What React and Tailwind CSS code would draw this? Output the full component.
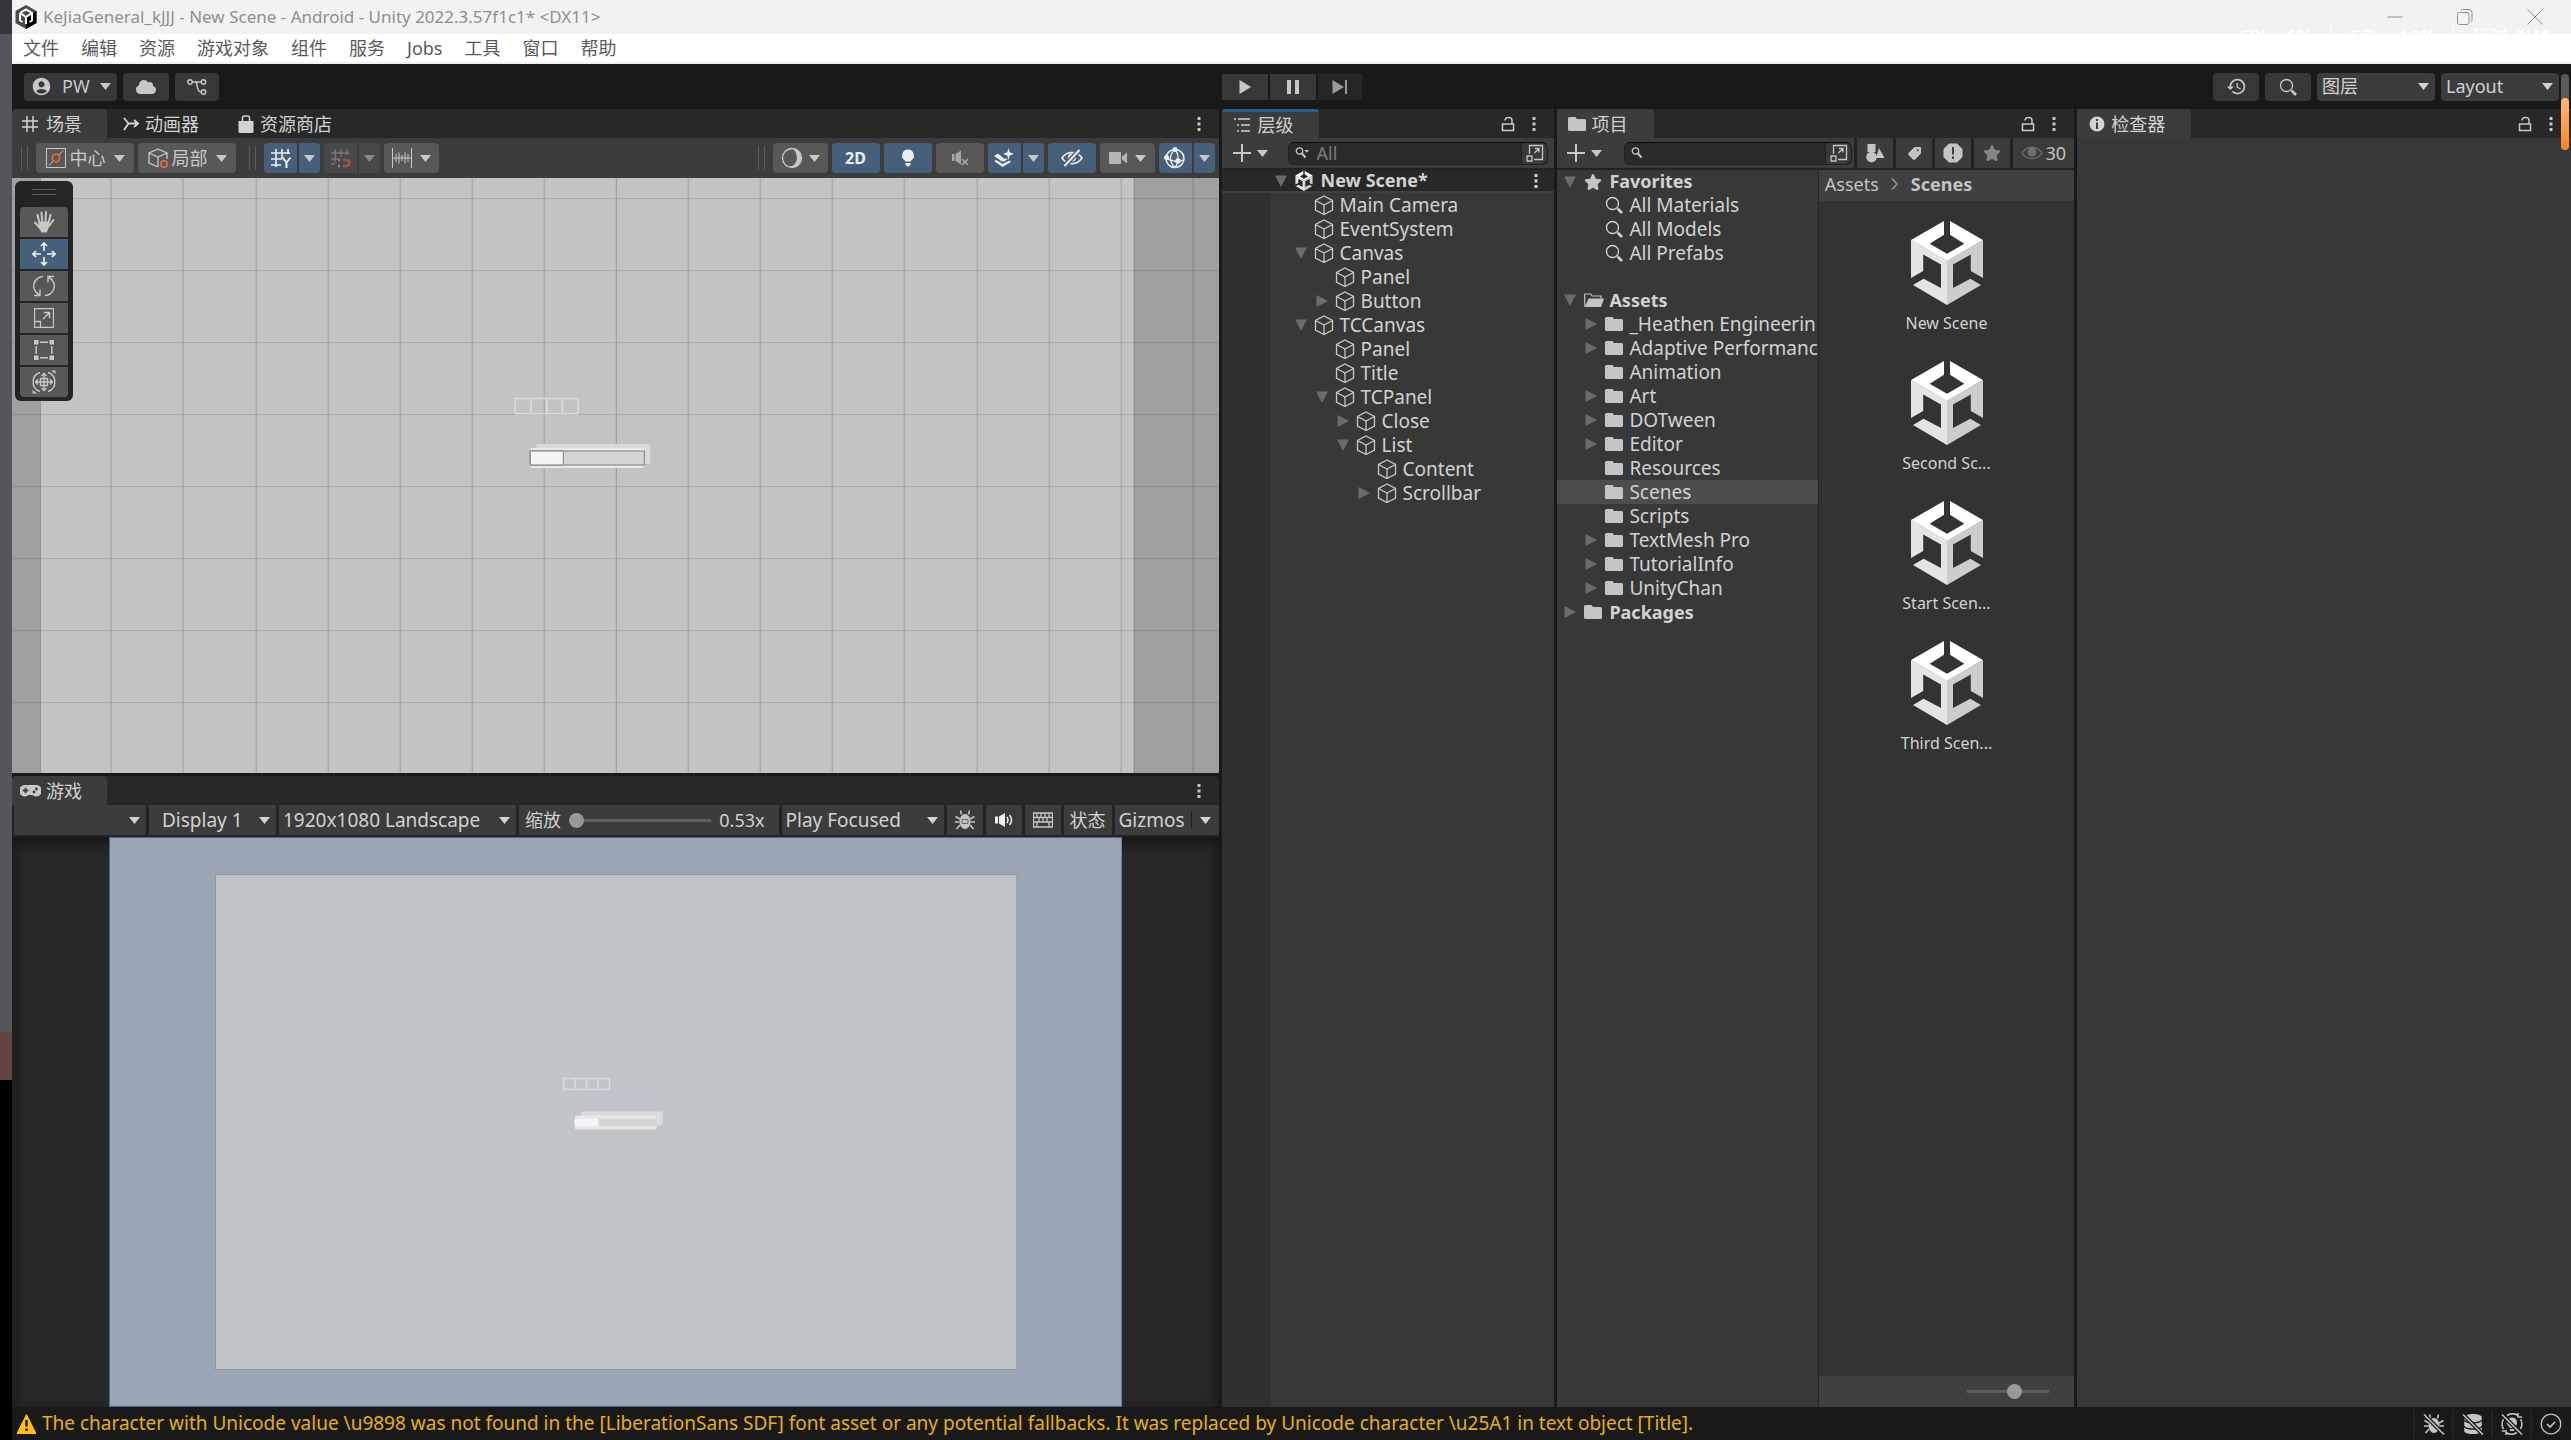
import { FaCloud, FaDatabase, FaStar, FaTag } from "react-icons/fa6";
import { MdAccountCircle, MdHistory } from "react-icons/md";

const MENUS = ["文件", "编辑", "资源", "游戏对象", "组件", "服务", "Jobs", "工具", "窗口", "帮助"];

const HIERARCHY = [
  { name: "Main Camera", depth: 0 },
  { name: "EventSystem", depth: 0 },
  { name: "Canvas", depth: 0, open: true },
  { name: "Panel", depth: 1 },
  { name: "Button", depth: 1, open: false },
  { name: "TCCanvas", depth: 0, open: true },
  { name: "Panel", depth: 1 },
  { name: "Title", depth: 1 },
  { name: "TCPanel", depth: 1, open: true },
  { name: "Close", depth: 2, open: false },
  { name: "List", depth: 2, open: true },
  { name: "Content", depth: 3 },
  { name: "Scrollbar", depth: 3, open: false },
];

const FAVORITES = ["All Materials", "All Models", "All Prefabs"];

const FOLDERS = [
  { name: "_Heathen Engineerin", open: false },
  { name: "Adaptive Performanc", open: false },
  { name: "Animation" },
  { name: "Art", open: false },
  { name: "DOTween", open: false },
  { name: "Editor", open: false },
  { name: "Resources" },
  { name: "Scenes", selected: true },
  { name: "Scripts" },
  { name: "TextMesh Pro", open: false },
  { name: "TutorialInfo", open: false },
  { name: "UnityChan", open: false },
];

const SCENES = ["New Scene", "Second Sc...", "Start Scen...", "Third Scen..."];

const GRID_X = [99, 171, 244, 316, 388, 460, 532, 676, 748, 820, 892, 965, 1037, 1109, 1181];
const GRID_Y = [20, 92, 164, 236, 308, 380, 452, 524];

/* ---------- icons ---------- */

function Icon({ size = 20, box = 20, className = "", children }) {
  return (
    <svg
      width={size}
      height={size}
      viewBox={`0 0 ${box} ${box}`}
      fill="none"
      stroke="currentColor"
      className={`shrink-0 ${className}`}
      aria-hidden="true"
    >
      {children}
    </svg>
  );
}

function Caret({ className = "" }) {
  return (
    <svg width="11" height="7" viewBox="0 0 11 7" fill="currentColor" className={`shrink-0 ${className}`} aria-hidden="true">
      <path d="M0 0h11L5.500 7z" />
    </svg>
  );
}

function Foldout({ open }) {
  return (
    <svg width="12" height="12" viewBox="0 0 12 12" fill="#6c6c6c" className="shrink-0" aria-hidden="true">
      {open === true && <path d="M0 0.500h12L6 12z" />}
      {open === false && <path d="M0.500 0v12L12 6z" />}
    </svg>
  );
}

function Kebab() {
  return (
    <svg width="4" height="16" viewBox="0 0 4 16" fill="currentColor" aria-hidden="true">
      <path d="M0.500 1h3v3h-3zM0.500 6.500h3v3h-3zM0.500 12h3v3h-3z" />
    </svg>
  );
}

function Lock() {
  return (
    <Icon size={16} box={16}>
      <path d="M2.500 8h11v6.500h-11zM12 8V4.500a3 3 0 0 0-3-3H8a3 3 0 0 0-3 3" strokeWidth="1.500" />
    </Icon>
  );
}

function CubeIcon() {
  return (
    <Icon size={20} className="text-[#c8c8c8]">
      <path d="M10 1l8.500 4.500v9.500L10 19.500 1.500 15V5.500zM1.500 5.500L10 10l8.500-4.500M10 10v9.500" strokeWidth="1.300" />
    </Icon>
  );
}

function FolderIcon() {
  return (
    <svg width="18" height="14" viewBox="0 0 18 14" fill="#c4c4c4" className="shrink-0" aria-hidden="true">
      <path d="M1.500 0h6l1.500 2h7.500a1.500 1.500 0 0 1 1.500 1.500v9a1.500 1.500 0 0 1-1.500 1.500h-15A1.500 1.500 0 0 1 0 12.500v-11A1.500 1.500 0 0 1 1.500 0z" />
    </svg>
  );
}

function FolderOpenIcon() {
  return (
    <svg width="20" height="15" viewBox="0 0 20 15" className="shrink-0" aria-hidden="true">
      <path d="M0.700 13.500V1h6l1.500 2H17v2.500" fill="none" stroke="#c4c4c4" strokeWidth="1.200" />
      <path d="M4.500 5.500H20L17 14H0.800z" fill="#c4c4c4" />
    </svg>
  );
}

function GamepadIcon() {
  return (
    <svg width="21" height="12" viewBox="0 0 21 12" fill="#c8c8c8" className="shrink-0" aria-hidden="true">
      <path d="M5.500 0h10a5.500 5.500 0 0 1 1 11.500c-2 .5-3-1.500-4.500-1.500H9c-1.500 0-2.500 2-4.500 1.500A5.500 5.500 0 0 1 5.500 0z" />
      <path d="M5.500 2.800v5.400M2.800 5.500h5.400" stroke="#3c3c3c" strokeWidth="1.800" />
      <circle cx="16.500" cy="4" r="1.400" fill="#3c3c3c" />
      <circle cx="14" cy="7" r="1.400" fill="#3c3c3c" />
    </svg>
  );
}

function HandIcon() {
  return (
    <Icon size={24} box={24}>
      <path d="M7.500 13L5.500 5M10.300 12L9.500 2.500M13.500 12l.5-10M16.500 13l2-8M8 18l-5-5.500" strokeWidth="2" strokeLinecap="round" />
      <path d="M6.500 11.500h11l-.5 4c0 3-1.500 4-2 7H9.500c-.5-2-2-3-3-5z" fill="currentColor" stroke="none" />
      <path d="M17 16l4.500-6" strokeWidth="2" strokeLinecap="round" />
    </Icon>
  );
}

function Magnifier({ size = 18 }) {
  return (
    <Icon size={size} box={18}>
      <circle cx="7.500" cy="7.500" r="6" strokeWidth="1.300" />
      <path d="M12.500 12.500l4.500 4.500" strokeWidth="2.500" />
    </Icon>
  );
}

function SmallMagnifier({ caret }) {
  return (
    <Icon size={14} box={14}>
      <circle cx="4.500" cy="5" r="3.200" strokeWidth="1.300" />
      <path d="M7 7.500l3.500 4" strokeWidth="2" />
      {caret && <path d="M9.500 4h4.500l-2.200 2.800z" fill="currentColor" stroke="none" />}
    </Icon>
  );
}

function PopoutIcon() {
  return (
    <Icon size={18} box={18}>
      <path d="M3.500 10V1.500h13v14H8M8.500 9L13 4.500M9 4.500h4v4M1 12h5v5H1z" strokeWidth="1.300" />
    </Icon>
  );
}

function UnityCube({ className }) {
  return (
    <svg viewBox="0 0 72 84" className={`shrink-0 ${className}`} aria-hidden="true">
      <path fill="#e4e4e4" d="M0 19L36 39.500V84L2 64l10.600-6.300L30 67V43.500L12.200 33.500V50L0 57z" />
      <path fill="#cdcdcd" d="M72 19L36 39.500V84l34-20-10.600-6.300L42 67V43.500l17.800-10V50L72 57z" />
      <path fill="#fff" d="M33 0v13.700L18.700 22.700 36 32.700l17.300-10L39 13.700V0l33 19-36 20.700L0 19z" />
    </svg>
  );
}

function BugIcon({ size = 22, off }) {
  return (
    <Icon size={size} box={22} className="text-[#c4c4c4]">
      <ellipse cx="11" cy="12.500" rx="5.500" ry="7.500" fill="currentColor" stroke="none" />
      <path d="M7.500 5.500L6.500 1.500M14.500 5.500l1-4M6 10L1.500 7.500M16 10l4.500-2.500M5.500 13H1M16.500 13H21M6 16l-3.500 4M16 16l3.500 4" strokeWidth="1.600" />
      {off ? (
        <>
          <path d="M1 1.500L21 21.500" stroke="#191919" strokeWidth="4" />
          <path d="M1 1.500L21 21.500" strokeWidth="1.500" />
        </>
      ) : (
        <path d="M8 10.500h6v4H8z" stroke="#6a6a6a" />
      )}
    </Icon>
  );
}

function SceneObjects({ x, y, w, h, cell, cx, cy, outline }) {
  const handle = w * 0.29;
  return (
    <g>
      <g fill="none" stroke="#dadada" strokeWidth="1.500">
        {[0, 1, 2, 3].map((i) => (
          <rect key={i} x={cx + i * cell} y={cy} width={cell} height={cell - 0.5} />
        ))}
      </g>
      <rect x={x + 6} y={y - 4} width={w} height={h} rx="2" fill="#dadada" />
      <rect x={x} y={y} width={w} height={h} rx="2" fill="#e8e8e8" />
      <rect x={x} y={y + 3} width={w} height={h - 6} fill="#d5d5d5" stroke={outline} />
      <rect x={x} y={y + 3} width={handle} height={h - 6} rx="1.500" fill="#f5f5f5" stroke={outline} />
    </g>
  );
}

/* ---------- shared pieces ---------- */

function Tab({ icon, label, active, focused, className = "" }) {
  return (
    <button
      type="button"
      className={`flex h-full items-center rounded-t text-[18px] leading-none text-[#d2d2d2] ${
        active ? "bg-[#3c3c3c]" : ""
      } ${focused ? "border-t-[3px] border-[#2c5d87]" : ""} ${className}`}
    >
      <span className="flex w-4 justify-center">{icon}</span>
      {label}
    </button>
  );
}

function TabBar({ lock, children }) {
  return (
    <div className="flex h-[29px] shrink-0 items-center rounded-t bg-[#282828]">
      {children}
      <div className="ml-auto flex items-center gap-4 pr-[18px] text-[#c8c8c8]">
        {lock && (
          <button type="button" aria-label="锁定">
            <Lock />
          </button>
        )}
        <button type="button" aria-label="更多">
          <Kebab />
        </button>
      </div>
    </div>
  );
}

function ToolButton({ label, tone = "normal", className = "", children }) {
  const tones = {
    normal: "bg-[#585858] text-[#c8c8c8]",
    on: "bg-[#46607c] text-[#eeeeee]",
    off: "bg-[#484848] text-[#8a8a8a]",
  };
  return (
    <button
      type="button"
      aria-label={label}
      className={`flex h-[30px] shrink-0 items-center justify-center ${tones[tone]} ${className}`}
    >
      {children}
    </button>
  );
}

function SplitButton({ label, tone, children }) {
  return (
    <div className="flex gap-0.5">
      <ToolButton label={label} tone={tone} className="w-[33px] rounded-l">
        {children}
      </ToolButton>
      <ToolButton label={`${label}选项`} tone={tone} className="w-[21px] rounded-r">
        <Caret className={tone === "on" ? "text-[#c8c8c8]" : ""} />
      </ToolButton>
    </div>
  );
}

function Grip() {
  return <span className="h-6 w-[7px] border-x border-[#5c5c5c]" />;
}

function Dropdown({ label, value, className = "", selectClass = "" }) {
  return (
    <label className={`relative flex items-center bg-[#3c3c3c] ${className}`}>
      <select
        aria-label={label}
        defaultValue={value}
        className={`h-full w-full appearance-none bg-transparent text-[#d2d2d2] outline-none ${selectClass}`}
      >
        <option value={value}>{value}</option>
      </select>
      <Caret className="pointer-events-none absolute right-1.5 text-[#d2d2d2]" />
    </label>
  );
}

function SearchBox({ label, placeholder, caret, className = "" }) {
  return (
    <div
      className={`flex h-[23px] items-center rounded-md border border-[#202020] border-t-[#0d0d0d] bg-[#2a2a2a] text-[#c4c4c4] ${className}`}
    >
      <label className="flex min-w-0 flex-1 items-center gap-2 pl-1.5">
        <SmallMagnifier caret={caret} />
        <input
          type="text"
          aria-label={label}
          placeholder={placeholder}
          className="w-full min-w-0 bg-transparent text-[18px] leading-5 outline-none placeholder:text-[#7c7c7c]"
        />
      </label>
      <button type="button" aria-label="打开搜索窗口" className="flex h-full w-[26px] items-center justify-center rounded-r-md border-l border-[#202020] bg-[#383838]">
        <PopoutIcon />
      </button>
    </div>
  );
}

function AddButton() {
  return (
    <button type="button" aria-label="添加" className="flex items-center gap-1.5 text-[#c8c8c8]">
      <Icon size={18} box={18}>
        <path d="M9 0v18M0 9h18" strokeWidth="2" />
      </Icon>
      <Caret />
    </button>
  );
}

/* ---------- window chrome ---------- */

function TitleBar() {
  return (
    <header className="relative flex h-[34px] shrink-0 items-center bg-[#f2f2f2] pl-[3px] text-[#8f8f8f]">
      <svg width="22" height="24" viewBox="0 0 22 24" className="shrink-0" aria-hidden="true">
        <path d="M11 0l10.500 6v12L11 24 0.500 18V6z" fill="#4a4a4a" />
        <path d="M11 12l10.500-6v12L11 24z" fill="#000" />
        <path d="M5 8l6-3.500L17 8v7.500l-2.500 1.500M5 8v7.500L7.500 17M5 8l6 4 6-4M11 12v7" fill="none" stroke="#fff" strokeWidth="2" />
      </svg>
      <h1 className="ml-1.5 text-[17px] whitespace-nowrap">
        KeJiaGeneral_kJJJ - New Scene - Android - Unity 2022.3.57f1c1* &lt;DX11&gt;
      </h1>
      {/* performance overlay, white text that runs on over the white menu bar */}
      <div className="absolute top-5 right-5 flex items-start gap-[18px] text-[18px] leading-6 text-white">
        <span className="mt-1 flex gap-3">CPU <b>1%</b></span>
        <span className="h-3.5 w-px bg-white" />
        <span className="mt-1 flex gap-3">GPU <b>12%</b></span>
        <span className="h-3.5 w-px bg-white" />
        <span className="mt-1 flex gap-2">延时 <b>N/A</b></span>
      </div>
      <div className="relative ml-auto flex items-center gap-[54px] pr-7">
        <button type="button" aria-label="最小化">
          <Icon size={16} box={16}><path d="M0.500 8h15" /></Icon>
        </button>
        <button type="button" aria-label="还原">
          <Icon size={16} box={16}>
            <rect x="0.500" y="3.500" width="11.500" height="12" rx="2" />
            <path d="M3.500 1.500Q4 0.500 5.500 0.500H12a3 3 0 0 1 3 3V11q0 1.500-1 2" />
          </Icon>
        </button>
        <button type="button" aria-label="关闭">
          <Icon size={16} box={16}><path d="M0.500 0.500l15 15M15.500 0.500l-15 15" /></Icon>
        </button>
      </div>
    </header>
  );
}

function MenuBar() {
  return (
    <nav className="flex h-[30px] shrink-0 items-center gap-[22px] border-b-2 border-[#f0f0f0] bg-white pl-[11px] text-[18px] text-[#5a5a5a]">
      {MENUS.map((menu) => (
        <button type="button" key={menu}>{menu}</button>
      ))}
    </nav>
  );
}

function MainToolbar() {
  return (
    <div className="relative grid h-[45px] shrink-0 grid-cols-[1fr_auto_1fr] items-center px-3 text-[#c8c8c8]">
      <div className="flex items-center gap-1.5">
        <button type="button" className="flex h-7 w-[93px] items-center rounded-sm bg-[#383838] pl-[7px] text-[18px]">
          <MdAccountCircle size={21} />
          <span className="ml-2.5">PW</span>
          <Caret className="mr-1.5 ml-auto" />
        </button>
        <button type="button" aria-label="云服务" className="flex h-7 w-[46px] items-center justify-center rounded-sm bg-[#383838]">
          <FaCloud size={20} />
        </button>
        <button type="button" aria-label="版本控制" className="flex h-7 w-11 items-center justify-center rounded-sm bg-[#383838]">
          <Icon size={20}>
            <circle cx="3" cy="5" r="2.200" strokeWidth="1.400" />
            <circle cx="16.500" cy="5" r="2.200" strokeWidth="1.400" />
            <circle cx="16.500" cy="15" r="2.200" strokeWidth="1.400" />
            <path d="M5 5h9.500M9 5c2 3 0 10 5.500 10" strokeWidth="1.400" />
          </Icon>
        </button>
      </div>

      <div className="flex gap-0.5">
        <button type="button" aria-label="播放" className="flex h-[26px] w-[46px] items-center justify-center bg-[#383838]">
          <Icon size={16} box={16}><path d="M2.500 1L14 8 2.500 15z" fill="currentColor" stroke="none" /></Icon>
        </button>
        <button type="button" aria-label="暂停" className="flex h-[26px] w-[46px] items-center justify-center bg-[#383838]">
          <Icon size={16} box={16}><path d="M2 1h4v14H2zM10 1h4v14h-4z" fill="currentColor" stroke="none" /></Icon>
        </button>
        <button type="button" aria-label="单步" className="flex h-[26px] w-11 items-center justify-center bg-[#262626] text-[#9a9a9a]">
          <Icon size={16} box={16}><path d="M0.500 1L12 8 0.500 15zM13 1h2v14h-2z" fill="currentColor" stroke="none" /></Icon>
        </button>
      </div>

      <div className="flex items-center justify-end gap-1.5">
        <button type="button" aria-label="撤销历史" className="flex h-7 w-[46px] items-center justify-center rounded-sm bg-[#383838]">
          <MdHistory size={21} />
        </button>
        <button type="button" aria-label="搜索" className="flex h-7 w-[46px] items-center justify-center rounded-sm bg-[#383838]">
          <Magnifier />
        </button>
        <Dropdown label="图层" value="图层" className="h-7 w-[118px] rounded-sm" selectClass="pl-[5px] text-[18px]" />
        <Dropdown label="布局" value="Layout" className="h-7 w-[118px] rounded-sm" selectClass="pl-[5px] text-[18px]" />
      </div>
      <span className="absolute top-[10px] right-0.5 z-10 flex h-[76px] w-2 flex-col rounded bg-[#5a5a5a] pt-6">
        <span className="flex-1 rounded bg-linear-to-b from-[#ffb877] to-[#ff8127]" />
      </span>
    </div>
  );
}

/* ---------- scene ---------- */

function SceneToolbar() {
  return (
    <div className="flex h-10 shrink-0 items-center bg-[#3c3c3c] pr-1 pl-[9px]">
      <Grip />
      <div className="ml-2 flex gap-1">
        <ToolButton label="中心" className="w-[98px] gap-1 rounded text-[18px]">
          <Icon size={20}>
            <path d="M0.500 0.500h19v19h-19z" />
            <path d="M3 17.500L7 13M13 7l4-4.500" />
            <circle cx="10" cy="10" r="3.700" stroke="#f06a3a" strokeWidth="1.600" />
          </Icon>
          <span>中心</span>
          <Caret className="ml-1" />
        </ToolButton>
        <ToolButton label="局部" className="w-[98px] gap-1 rounded text-[18px]">
          <Icon size={20}>
            <path d="M10 1l9 4v6M10 1L1 5v10l9 4M1 5l9 4 9-4M10 9v10" strokeWidth="1.300" />
            <circle cx="16" cy="16" r="3.200" stroke="#f06a3a" strokeWidth="1.600" />
          </Icon>
          <span>局部</span>
          <Caret className="ml-1" />
        </ToolButton>
      </div>
      <span className="ml-[13px] flex"><Grip /></span>
      <div className="ml-2 flex gap-1">
        <SplitButton label="网格" tone="on">
          <Icon size={20}>
            <path d="M5 1v18M11 1v9M17 1v5M0 5h19M0 11h11M0 17h10" strokeWidth="1.600" />
            <path d="M11.500 9.500l4 5 4-5M15.500 14.500V20" strokeWidth="2" />
          </Icon>
        </SplitButton>
        <SplitButton label="网格对齐" tone="off">
          <Icon size={20}>
            <path d="M4 1v13M10 1v8M16 1v6M0 5h18M0 11h8M0 16h4" />
            <path d="M12 12h3.500a3 3 0 0 1 0 6H12" stroke="#a8533a" strokeWidth="2.500" />
            <path d="M7 12h2M7 18h2" strokeWidth="2.500" />
          </Icon>
        </SplitButton>
        <ToolButton label="增量对齐" className="w-[55px] gap-2 rounded">
          <Icon size={20}>
            <path d="M0.500 0v20M19.500 0v20M4 6v8M7 4.500v11M10 7v6M13 4.500v11M16 6v8M0.500 10h19" />
          </Icon>
          <Caret />
        </ToolButton>
      </div>

      <div className="ml-auto flex items-center gap-1">
        <span className="mr-1 flex"><Grip /></span>
        <ToolButton label="绘制模式" className="w-[55px] gap-1.5 rounded">
          <Icon size={22} box={22}>
            <circle cx="11" cy="11" r="9.500" strokeWidth="1.300" />
            <path d="M12 1.500A9.500 9.500 0 1 1 7 19.700C16 20 19 9 12 1.500z" fill="currentColor" stroke="none" />
          </Icon>
          <Caret />
        </ToolButton>
        <ToolButton label="2D" tone="on" className="w-12 rounded text-base font-bold">2D</ToolButton>
        <ToolButton label="光照" tone="on" className="w-12 rounded">
          <Icon size={20}>
            <path d="M10 1.500a6 6 0 0 1 3.500 10.800c-.5.400-.7.700-.7 1.200H7.200c0-.5-.2-.8-.7-1.200A6 6 0 0 1 10 1.500zM7.500 15h5v1.500L11 18.500H9L7.500 16.500z" fill="currentColor" stroke="none" />
          </Icon>
        </ToolButton>
        <ToolButton label="音频" className="w-12 rounded">
          <Icon size={18} box={18} className="text-[#a8a8a8]">
            <path d="M1 5h2.500v7H1zM4.500 5L10 1.500v14L4.500 12z" fill="currentColor" stroke="none" />
            <path d="M11 10l6 6M17 10l-6 6" strokeWidth="1.600" />
          </Icon>
        </ToolButton>
        <SplitButton label="特效" tone="on">
          <Icon size={20}>
            <path d="M14.500 0l1.200 4.300L20 6l-4.300 1.500L14.500 12l-1.200-4.500L9 6l4.300-1.700zM0 8l4-2.500 6 5 4 .5-4 2.500H8zM0 13l2.500-1 6 4 7-3.500L17 14l-8.500 5z" fill="currentColor" stroke="none" />
          </Icon>
        </SplitButton>
        <ToolButton label="场景可见性" tone="on" className="w-12 rounded">
          <Icon size={22} box={22}>
            <path d="M1 11c5-7.500 15-7.500 20 0-5 7.500-15 7.500-20 0z" strokeWidth="1.500" />
            <circle cx="11" cy="10.500" r="3.800" fill="currentColor" />
            <path d="M3.500 19L18.500 3" stroke="#46607c" strokeWidth="5" />
            <path d="M3.500 19L18.500 3" strokeWidth="2" />
          </Icon>
        </ToolButton>
        <ToolButton label="摄像机" className="w-[55px] gap-2 rounded">
          <Icon size={18} box={18} className="text-[#b4b4b4]">
            <path d="M0 3h12v12H0zM13 7.500l5-4v11l-5-4z" fill="currentColor" stroke="none" />
          </Icon>
          <Caret />
        </ToolButton>
        <SplitButton label="小工具" tone="on">
          <Icon size={22} box={22}>
            <circle cx="11" cy="11.500" r="9" strokeWidth="1.500" />
            <path d="M11 2.500c-6 5-6 12.500 0 18M11 2.500c4 4 4 13 0 18M2 10.500c4 4 13 5 18 2" strokeWidth="1.300" />
            <circle cx="11" cy="2.500" r="2.500" fill="currentColor" stroke="none" />
            <circle cx="2.500" cy="10.500" r="2.500" fill="currentColor" stroke="none" />
            <circle cx="14" cy="14" r="2.800" fill="currentColor" stroke="none" />
          </Icon>
        </SplitButton>
      </div>
    </div>
  );
}

function ToolsOverlay() {
  return (
    <div className="absolute top-[3px] left-[3px] flex w-[58px] flex-col items-center gap-0.5 rounded-md bg-[#1c1c1c]/95 pb-1">
      <span className="mt-2 mb-2.5 h-1.5 w-6 border-y border-[#5c5c5c]" />
      <ToolButton label="视图工具" className="w-12 rounded-t">
        <HandIcon />
      </ToolButton>
      <ToolButton label="移动工具" tone="on" className="w-12">
        <Icon size={24} box={24}>
          <path d="M12 1v8M12 15v8M1 12h8M15 12h8M9 4l3-3 3 3M9 20l3 3 3-3M4 9l-3 3 3 3M20 9l3 3-3 3" strokeWidth="1.700" />
        </Icon>
      </ToolButton>
      <ToolButton label="旋转工具" className="w-12">
        <Icon size={22} box={22}>
          <path d="M10 1.500A9.500 9.500 0 0 0 6 19.500M12 20.500A9.500 9.500 0 0 0 16 2.500M1 20.500h6v-6M21 1.500h-6v6" strokeWidth="1.400" />
        </Icon>
      </ToolButton>
      <ToolButton label="缩放工具" className="w-12">
        <Icon size={20}>
          <path d="M0.500 0.500h19v19h-19zM0.500 13.500h6v6M9 11l6-6M10 4.500h5.500V10" strokeWidth="1.300" />
        </Icon>
      </ToolButton>
      <ToolButton label="矩形工具" className="w-12">
        <Icon size={20}>
          <path d="M0 0h4.500v4.500H0zM15.500 0H20v4.500h-4.500zM0 15.500h4.500V20H0zM15.500 15.500H20V20h-4.500z" fill="currentColor" stroke="none" />
          <path d="M6 2.200h8M6 17.800h8M2.200 6v8M17.800 6v8" strokeWidth="1.500" />
        </Icon>
      </ToolButton>
      <ToolButton label="变换工具" className="w-12 rounded-b">
        <Icon size={24} box={24}>
          <path d="M8 2.500A10 10 0 0 0 8 21.500M16 2.500a10 10 0 0 1 0 19M4 12h16M12 4v16M9.500 6L12 3.500 14.500 6M9.500 18l2.500 2.500 2.500-2.500M6 9.500L3.500 12 6 14.500M18 9.500l2.500 2.500-2.500 2.500M8.500 8.500h7v7h-7z" strokeWidth="1.400" />
          <path d="M19 0.500h4.500V4zM0.500 20v3.500H5z" fill="currentColor" stroke="none" />
        </Icon>
      </ToolButton>
    </div>
  );
}

function ScenePanel() {
  return (
    <section className="flex flex-[664_1_0px] flex-col">
      <TabBar>
        <Tab
          active
          className="w-[95px] gap-2 pl-2.5"
          label="场景"
          icon={<Icon size={16} box={16}><path d="M5 0v16M11 0v16M0 5h16M0 11h16" strokeWidth="1.500" /></Icon>}
        />
        <Tab
          className="w-[115px] gap-1.5 pl-4"
          label="动画器"
          icon={<Icon size={16} box={16}><path d="M1 2l4.500 5.500H14M1 14l4.500-6.500M11 4l4 3.500-4 3.500" strokeWidth="1.900" /></Icon>}
        />
        <Tab
          className="gap-1.5 pl-4"
          label="资源商店"
          icon={
            <Icon size={18} box={18}>
              <path d="M1.500 6h15v10.500a1.500 1.500 0 0 1-1.500 1.500H3a1.500 1.500 0 0 1-1.500-1.500z" fill="currentColor" stroke="none" />
              <path d="M5.500 8V3q0-2 2-2h3q2 0 2 2v5" strokeWidth="1.500" />
            </Icon>
          }
        />
      </TabBar>
      <SceneToolbar />
      <div className="relative flex-1 overflow-hidden bg-[#a0a0a0]">
        <svg viewBox="0 0 1207 595" preserveAspectRatio="xMidYMid slice" className="absolute inset-0 h-full w-full" aria-label="场景视图">
          <rect x="28" width="1094" height="595" fill="#c3c3c3" />
          <path d="M28.500 0v595M1122.500 0v595" stroke="#8a8a8a" />
          {GRID_X.map((x) => (
            <path key={x} d={`M${x + 0.5} 0v595`} stroke="#000" strokeOpacity="0.120" strokeWidth="1.500" />
          ))}
          {GRID_Y.map((y) => (
            <path key={y} d={`M0 ${y + 0.5}h1207`} stroke="#000" strokeOpacity="0.110" />
          ))}
          <path d="M604.500 0v595" stroke="#989898" />
          <SceneObjects x={518.5} y={270} w={114} h={20} cell={15.7} cx={503.5} cy={220.5} outline="#7c7c7c" />
        </svg>
        <ToolsOverlay />
      </div>
    </section>
  );
}

/* ---------- game ---------- */

function GameToolbar() {
  return (
    <div className="flex h-8 shrink-0 gap-[3px] border-b-2 border-[#232323] bg-[#232323] pl-0.5">
      <Dropdown label="视图类型" value="" className="w-[132px]" />
      <Dropdown label="显示器" value="Display 1" className="w-[127px]" selectClass="pl-[13px] text-[19px]" />
      <Dropdown label="分辨率" value="1920x1080 Landscape" className="w-[237px]" selectClass="pl-1 text-[19px]" />
      <label className="flex flex-1 items-center bg-[#3c3c3c] pr-3.5 pl-1.5 text-[18px] whitespace-nowrap text-[#d2d2d2]">
        缩放
        <input
          type="range"
          min="0"
          max="100"
          defaultValue="0"
          className="mx-2 h-4 min-w-0 flex-1 appearance-none bg-transparent [&::-webkit-slider-runnable-track]:h-[3px] [&::-webkit-slider-runnable-track]:bg-[#5e5e5e] [&::-webkit-slider-thumb]:-mt-1.5 [&::-webkit-slider-thumb]:size-[15px] [&::-webkit-slider-thumb]:appearance-none [&::-webkit-slider-thumb]:rounded-full [&::-webkit-slider-thumb]:bg-[#999999]"
        />
        0.53x
      </label>
      <Dropdown label="播放模式" value="Play Focused" className="w-[162px]" selectClass="pl-1 text-[19px]" />
      <button type="button" aria-label="调试" className="flex w-9 items-center justify-center bg-[#3c3c3c]">
        <BugIcon />
      </button>
      <button type="button" aria-label="静音" className="flex w-9 items-center justify-center bg-[#3c3c3c] text-[#eeeeee]">
        <Icon size={18} box={18}>
          <path d="M0 5.500h3v7H0zM4 5.500L10 2v14l-6-3.500z" fill="currentColor" stroke="none" />
          <path d="M12 6q2 3 0 6M14.500 4q4 5 0 10" strokeWidth="1.500" />
        </Icon>
      </button>
      <button type="button" aria-label="快捷键" className="flex w-9 items-center justify-center bg-[#3c3c3c] text-[#c8c8c8]">
        <Icon size={20}>
          <path d="M0.500 3h19v14h-19zM0.500 7.500h19M0.500 12h19M4 3v4.500M8 3v4.500M12 3v4.500M16 3v4.500M6 7.500V12M10 7.500V12M14 7.500V12M4 12v5M16 12v5" strokeWidth="1.300" />
        </Icon>
      </button>
      <button type="button" className="w-12 bg-[#3c3c3c] text-[18px] text-[#d2d2d2]">状态</button>
      <div className="flex w-[104px] items-center bg-[#3c3c3c] text-[#d2d2d2]">
        <button type="button" className="pl-1 text-[19px]">Gizmos</button>
        <button type="button" aria-label="Gizmos 选项" className="ml-auto flex h-[18px] items-center border-l border-[#232323] pr-2 pl-2">
          <Caret />
        </button>
      </div>
    </div>
  );
}

function GamePanel() {
  return (
    <section className="flex flex-[631_1_0px] flex-col">
      <TabBar>
        <Tab active className="w-[95px] gap-2 pl-2.5" label="游戏" icon={<GamepadIcon />} />
      </TabBar>
      <GameToolbar />
      <div className="relative flex-1 bg-[#282828] shadow-[inset_0_6px_14px_#151515]">
        <svg viewBox="0 0 1013 570" preserveAspectRatio="none" className="absolute inset-y-0 left-[8%] h-full w-[84%]" aria-label="游戏视图">
          <rect x="0.500" y="0.500" width="1012" height="569" fill="#9aa5b5" stroke="#4a6482" />
          <rect x="106.500" y="37.500" width="801" height="495" fill="#c0c3c7" stroke="#8e949c" />
          <SceneObjects x={465.5} y={278.5} w={82} h={14} cell={11.4} cx={454.5} cy={241.5} outline="none" />
        </svg>
      </div>
    </section>
  );
}

/* ---------- hierarchy ---------- */

function HierarchyPanel() {
  return (
    <section className="flex min-w-0 flex-[333_1_0%] flex-col bg-[#383838]">
      <TabBar lock>
        <Tab
          active
          focused
          className="w-[97px] gap-2 pl-3"
          label="层级"
          icon={<Icon size={16} box={16}><path d="M0 2h2M4 2h12M3 8h2M7 8h9M3 14h2M7 14h9" strokeWidth="1.500" /></Icon>}
        />
      </TabBar>
      <div className="flex h-8 shrink-0 items-center gap-5 border-b-2 border-[#232323] bg-[#3c3c3c] pr-1.5 pl-[11px]">
        <AddButton />
        <SearchBox label="搜索层级" placeholder="All" caret className="flex-1" />
      </div>
      <div className="flex h-[23px] shrink-0 items-center border-b-2 border-[#3f3f3f] bg-[#282828] pr-4 pl-[53px] text-[#d2d2d2]">
        <Foldout open />
        <UnityCube className="ml-2 h-5 w-[18px]" />
        <span className="ml-2 text-[18px] font-bold">New Scene*</span>
        <button type="button" aria-label="场景菜单" className="ml-auto"><Kebab /></button>
      </div>
      <div className="flex flex-1">
        <div className="w-[49px] bg-[#303030]" />
        <ul className="flex-1">
          {HIERARCHY.map((item, i) => (
            <li
              key={i}
              className="flex h-6 items-center text-[19px] text-[#d2d2d2]"
              style={{ paddingLeft: 24 + item.depth * 21 }}
            >
              <Foldout open={item.open} />
              <span className="ml-[7px] flex"><CubeIcon /></span>
              <span className="ml-1.5">{item.name}</span>
            </li>
          ))}
        </ul>
      </div>
    </section>
  );
}

/* ---------- project ---------- */

function FilterButton({ label, className = "w-9", children }) {
  return (
    <button type="button" aria-label={label} className={`flex h-full shrink-0 items-center justify-center bg-[#3c3c3c] text-[#c4c4c4] ${className}`}>
      {children}
    </button>
  );
}

function ProjectTree() {
  return (
    <ul className="min-w-0 flex-[261_1_0%] text-[19px] whitespace-nowrap text-[#d2d2d2]">
      <li className="flex h-[23px] items-center pl-[7px] text-[18px] font-bold">
        <Foldout open />
        <FaStar size={18} className="ml-2 shrink-0 text-[#c4c4c4]" />
        <span className="ml-[7px]">Favorites</span>
      </li>
      {FAVORITES.map((name) => (
        <li key={name} className="flex h-6 items-center gap-1.5 pl-12">
          <Magnifier />
          {name}
        </li>
      ))}
      <li className="mt-[23px] flex h-6 items-center pl-[7px] text-[18px] font-bold">
        <Foldout open />
        <span className="ml-2 flex"><FolderOpenIcon /></span>
        <span className="ml-[5px]">Assets</span>
      </li>
      {FOLDERS.map((item) => (
        <li key={item.name} className={`flex h-6 items-center pl-7 ${item.selected ? "bg-[#4d4d4d]" : ""}`}>
          <Foldout open={item.open} />
          <span className="ml-2 flex"><FolderIcon /></span>
          <span className="ml-1.5">{item.name}</span>
        </li>
      ))}
      <li className="flex h-6 items-center pl-[7px] text-[18px] font-bold">
        <Foldout open={false} />
        <span className="ml-2 flex"><FolderIcon /></span>
        <span className="ml-[7px]">Packages</span>
      </li>
    </ul>
  );
}

function ProjectPanel() {
  return (
    <section className="flex min-w-0 flex-[517_1_0%] flex-col bg-[#383838]">
      <TabBar lock>
        <Tab active className="w-[97px] gap-1.5 pl-3" label="项目" icon={<FolderIcon />} />
      </TabBar>
      <div className="flex h-8 shrink-0 items-center gap-[3px] border-b-2 border-[#232323] bg-[#232323]">
        <div className="flex h-full min-w-0 flex-1 items-center gap-[22px] bg-[#3c3c3c] pr-0.5 pl-2.5">
          <AddButton />
          <SearchBox label="搜索项目" className="min-w-0 flex-1" />
        </div>
        <FilterButton label="按类型搜索">
          <Icon size={20}>
            <path d="M2.500 1h8v8h-8zM14 5l5.500 10H11z" fill="currentColor" stroke="none" />
            <circle cx="6.500" cy="14" r="5.300" fill="currentColor" stroke="none" />
          </Icon>
        </FilterButton>
        <FilterButton label="按标签搜索"><FaTag size={15} className="rotate-90" /></FilterButton>
        <FilterButton label="按日志类型搜索">
          <Icon size={20}>
            <path d="M6 0.500h8L19.500 6v8L14 19.500H6L0.500 14V6z" fill="currentColor" stroke="none" />
            <path d="M10 4v7.500M10 13.500V16" stroke="#3c3c3c" strokeWidth="2" />
          </Icon>
        </FilterButton>
        <FilterButton label="保存搜索"><FaStar size={18} className="text-[#858585]" /></FilterButton>
        <FilterButton label="隐藏包" className="w-[61px] gap-0.5 text-[18px]">
          <Icon size={22} box={22} className="text-[#6e6e6e]">
            <path d="M1 11c5-7.500 15-7.500 20 0-5 7.500-15 7.500-20 0z" strokeWidth="1.300" />
            <circle cx="11" cy="10" r="4.500" fill="currentColor" stroke="none" />
          </Icon>
          30
        </FilterButton>
      </div>
      <div className="flex flex-1">
        <ProjectTree />
        <div className="flex min-w-0 flex-[256_1_0%] flex-col border-l border-[#232323] bg-[#333333] text-[#d2d2d2]">
          <nav className="flex h-[31px] shrink-0 items-center bg-[#404040] pb-[3px] pl-1.5 text-[18px] text-[#c4c4c4]">
            <a href="#assets">Assets</a>
            <Icon size={12} box={12} className="mx-2.5 text-[#909090]"><path d="M3 0.500L8 6l-5 5.500" strokeWidth="1.800" /></Icon>
            <a href="#scenes" className="font-bold">Scenes</a>
          </nav>
          <ul className="flex flex-1 flex-col pt-5">
            {SCENES.map((name) => (
              <li key={name} className="flex h-[140px] w-full flex-col items-center">
                <UnityCube className="h-[84px] w-[72px]" />
                <span className="mt-1.5 text-base">{name}</span>
              </li>
            ))}
          </ul>
          <div className="flex h-[31px] shrink-0 items-center justify-end bg-[#404040] pr-[25px]">
            <input
              type="range"
              aria-label="图标大小"
              min="0"
              max="100"
              defaultValue="60"
              className="h-4 w-[82px] appearance-none bg-transparent [&::-webkit-slider-runnable-track]:h-[3px] [&::-webkit-slider-runnable-track]:bg-[#5e5e5e] [&::-webkit-slider-thumb]:-mt-1.5 [&::-webkit-slider-thumb]:size-[15px] [&::-webkit-slider-thumb]:appearance-none [&::-webkit-slider-thumb]:rounded-full [&::-webkit-slider-thumb]:bg-[#999999]"
            />
          </div>
        </div>
      </div>
    </section>
  );
}

/* ---------- inspector ---------- */

function InspectorPanel() {
  return (
    <section className="flex min-w-0 flex-[494_1_0%] flex-col bg-[#383838]">
      <TabBar lock>
        <Tab
          active
          className="w-[114px] gap-1.5 pl-3"
          label="检查器"
          icon={
            <Icon size={16} box={16}>
              <circle cx="8" cy="8" r="7.500" fill="currentColor" stroke="none" />
              <path d="M8 3v2M8 6.500V13" stroke="#3c3c3c" strokeWidth="2" />
            </Icon>
          }
        />
      </TabBar>
    </section>
  );
}

/* ---------- status bar ---------- */

function StatusButton({ label, children }) {
  return (
    <button type="button" aria-label={label} className="flex w-[39px] items-center justify-center border-l-2 border-[#232323]">
      {children}
    </button>
  );
}

function StatusBar() {
  return (
    <footer className="flex h-[33px] shrink-0 items-center pl-[5px] text-[#e6b012]">
      <svg width="19" height="20" viewBox="0 0 19 20" className="shrink-0" aria-hidden="true">
        <path d="M9.500 0.500L19 19.500H0z" fill="#ffc107" stroke="#ffc107" strokeLinejoin="round" />
        <path d="M9.500 6v6.500M9.500 14.500V17" stroke="#191919" strokeWidth="2.400" />
      </svg>
      <p className="ml-1.5 text-[19px] whitespace-nowrap">
        The character with Unicode value \u9898 was not found in the [LiberationSans SDF] font asset or any potential fallbacks. It was replaced by Unicode character \u25A1 in text object [Title].
      </p>
      <div className="ml-auto flex h-7 pr-0.5 text-[#c4c4c4]">
        <StatusButton label="调试关闭">
          <BugIcon off />
        </StatusButton>
        <StatusButton label="缓存关闭">
          <Icon size={22} box={22}>
            <FaDatabase size={20} x="1" y="1" stroke="none" />
            <path d="M1 1.500L21 21.500" stroke="#191919" strokeWidth="4" />
            <path d="M1 1.500L21 21.500" strokeWidth="1.500" />
          </Icon>
        </StatusButton>
        <StatusButton label="自动光照关闭">
          <Icon size={22} box={22}>
            <path d="M6 2.500a10 10 0 0 1 11 0M19.500 6a10 10 0 0 1 0 10M16 19.500a10 10 0 0 1-11 0M2.500 16a10 10 0 0 1 0-10M17 0v4h4M5 22v-4H1" strokeWidth="1.500" />
            <path d="M11 4.500a5 5 0 0 1 2.500 9.300v1.200h-5v-1.200A5 5 0 0 1 11 4.500zM9 16h4v2H9z" fill="currentColor" stroke="none" />
            <path d="M1 1.500L21 21.500" stroke="#191919" strokeWidth="4" />
            <path d="M1 1.500L21 21.500" strokeWidth="1.500" />
          </Icon>
        </StatusButton>
        <StatusButton label="后台任务">
          <Icon size={22} box={22}>
            <circle cx="11" cy="11" r="9.800" strokeWidth="1.300" />
            <path d="M7 11l3 3 5-5" strokeWidth="1.600" />
          </Icon>
        </StatusButton>
      </div>
    </footer>
  );
}

export default function App() {
  return (
    <div className="flex min-h-screen w-full font-['Noto_Sans','Noto_Sans_CJK_SC',sans-serif]">
      <div className="flex w-3 shrink-0 flex-col bg-black" aria-hidden="true">
        <span className="h-[34px] bg-[#35363a]" />
        <span className="flex-[998_1_0px] bg-[#55565b]" />
        <span className="h-12 bg-[#63453f]" />
        <span className="flex-[360_1_0px]" />
      </div>
      <div className="flex min-w-0 flex-1 flex-col bg-[#191919]">
        <TitleBar />
        <MenuBar />
        <MainToolbar />
        <main className="flex flex-1 gap-[3px]">
          <div className="flex min-w-0 flex-[1207_1_0%] flex-col gap-[3px]">
            <ScenePanel />
            <GamePanel />
          </div>
          <HierarchyPanel />
          <ProjectPanel />
          <InspectorPanel />
        </main>
        <StatusBar />
      </div>
    </div>
  );
}
